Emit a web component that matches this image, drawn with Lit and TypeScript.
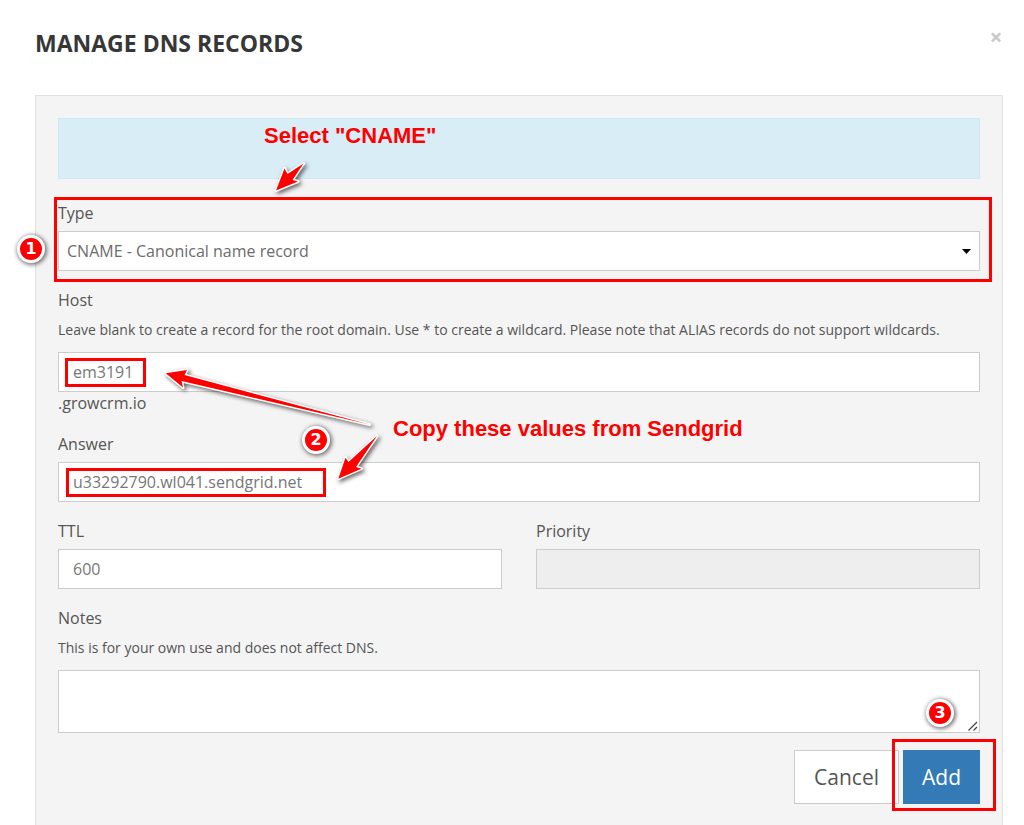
import { LitElement, html, css, svg } from "lit";
import { customElement, property } from "lit/decorators.js";

@customElement("step-badge")
class StepBadge extends LitElement {
  @property({ type: Number }) step = 1;

  static styles = css`
    :host {
      box-sizing: border-box;
      display: flex;
      align-items: center;
      justify-content: center;
      width: 28px;
      height: 28px;
      border: 3px solid #fff;
      border-radius: 50%;
      background: #fe0000;
      color: #fff;
      font: bold 16px/22px "DejaVu Sans", sans-serif;
      box-shadow: 1px 1px 4px 1px rgba(0, 0, 0, 0.55);
      pointer-events: none;
    }
  `;

  render() {
    return html`<span>${this.step}</span>`;
  }
}

const arrow = (points: string) => svg`<polygon class="arrow" points=${points} />`;

@customElement("app-root")
class AppRoot extends LitElement {
  static styles = css`
    :host {
      display: block;
      background: #fff;
      color: #555;
      font: 16px/22px "Open Sans", sans-serif;
    }
    * {
      box-sizing: border-box;
    }
    .dialog {
      padding: 28px 21px 0 35px;
      min-height: 100vh;
      display: flex;
      flex-direction: column;
    }
    .header {
      display: flex;
      justify-content: space-between;
      align-items: flex-start;
      height: 67px;
    }
    .title {
      margin: 0;
      font-size: 23px;
      line-height: 30px;
      font-weight: 700;
      color: #373737;
    }
    .close {
      border: 0;
      padding: 0;
      width: 14px;
      background: none;
      color: #c8c8c8;
      font: 700 22px/16px "Open Sans", sans-serif;
    }
    .panel {
      flex: 1;
      display: flex;
      flex-direction: column;
      gap: 19px;
      background: #f4f4f4;
      border: 1px solid #e1e1e1;
      border-bottom: 0;
      padding: 22px 22px 21px;
    }
    .notice {
      position: relative;
      height: 61px;
      margin-bottom: 5px;
      background: #d9edf7;
      border: 1px solid #cbebf3;
    }
    .group {
      position: relative;
      display: flex;
      flex-direction: column;
    }
    .label {
      margin-bottom: 8px;
      line-height: 20px;
    }
    .help {
      margin: 2px 0 12px;
      font-size: 14px;
      line-height: 20px;
    }
    .suffix {
      line-height: 23px;
    }
    .wrap {
      position: relative;
      display: flex;
    }
    .field {
      width: 100%;
      min-width: 0;
      height: 40px;
      margin: 0;
      padding: 0 14px;
      border: 1px solid #ccc;
      border-radius: 0;
      background: #fff;
      color: #777;
      font: 16px/22px "Open Sans", sans-serif;
    }
    .field:disabled {
      background: #eee;
    }
    .select {
      appearance: none;
      padding: 0 28px 0 8px;
      color: #6c6c6c;
    }
    .area {
      display: block;
      height: 63px;
      padding: 8px 14px;
      resize: vertical;
    }
    .area::-webkit-resizer {
      background: transparent;
    }
    .grip {
      position: absolute;
      right: 2px;
      bottom: 2px;
      width: 10px;
      height: 10px;
      fill: none;
      stroke: #444;
      stroke-width: 1.2;
      pointer-events: none;
    }
    .caret {
      position: absolute;
      right: 9px;
      top: 18px;
      width: 9px;
      height: 5px;
      pointer-events: none;
    }
    .columns {
      display: grid;
      grid-template-columns: 1fr 1fr;
      gap: 34px;
    }
    .actions {
      display: flex;
      justify-content: flex-end;
      gap: 4px;
      margin-top: -2px;
    }
    .button {
      height: 54px;
      padding: 0 19px;
      border: 1px solid #ccc;
      background: #fff;
      color: #555;
      font: 21px/28px "Open Sans", sans-serif;
    }
    .primary {
      border-color: #337ab7;
      background: #337ab7;
      color: #fff;
      padding: 0 18px;
    }
    .mark {
      position: absolute;
      border: 3px solid #fe0000;
      pointer-events: none;
    }
    .mark-type {
      inset: -6px -12px -11px -4px;
    }
    .mark-host {
      left: 7px;
      top: 6px;
      width: 81px;
      height: 29px;
    }
    .mark-answer {
      left: 8px;
      top: 6px;
      width: 260px;
      height: 29px;
    }
    .mark-add {
      inset: -11px -16px -7px -11px;
    }
    .badge {
      position: absolute;
    }
    .badge-type {
      left: -41px;
      top: 32px;
    }
    .badge-copy {
      left: 244px;
      top: 136px;
    }
    .badge-add {
      right: 26px;
      top: 29px;
    }
    .callout {
      position: absolute;
      color: #fe0000;
      font: bold 22px/26px "Liberation Sans", sans-serif;
      white-space: nowrap;
      pointer-events: none;
    }
    .callout-type {
      left: 205px;
      top: 4px;
    }
    .callout-copy {
      left: 335px;
      top: 126px;
    }
    .arrows {
      position: absolute;
      overflow: visible;
      pointer-events: none;
      filter: drop-shadow(2px 2px 2px rgba(0, 0, 0, 0.6));
      z-index: 1;
    }
    .arrow {
      fill: #fe0000;
      stroke: #fff;
      stroke-width: 3;
      stroke-linejoin: round;
      paint-order: stroke;
    }
    .arrows-type {
      left: 210px;
      top: 40px;
      width: 40px;
      height: 36px;
    }
    .arrows-copy {
      left: 100px;
      top: 76px;
      width: 230px;
      height: 120px;
    }
  `;

  render() {
    return html`
      <main class="dialog">
        <header class="header">
          <h1 class="title">MANAGE DNS RECORDS</h1>
          <button class="close" type="button" aria-label="Close">×</button>
        </header>
        <form class="panel">
          <div class="notice">
            <span class="callout callout-type">Select "CNAME"</span>
            <svg class="arrows arrows-type" viewBox="269 159 40 36" aria-hidden="true">
              ${arrow("276,190.5 284.5,168.5 287.5,174 303.5,163.5 292.5,180 298,181.5")}
            </svg>
          </div>

          <div class="group">
            <label class="label" for="type">Type</label>
            <div class="wrap">
              <select class="field select" id="type">
                <option>CNAME - Canonical name record</option>
              </select>
              <svg class="caret" viewBox="0 0 9 5" aria-hidden="true"><path d="M0 0H9L4.5 5Z" /></svg>
            </div>
            <span class="mark mark-type"></span>
            <step-badge class="badge badge-type" .step=${1}></step-badge>
          </div>

          <div class="group">
            <label class="label" for="host">Host</label>
            <p class="help">
              Leave blank to create a record for the root domain. Use * to create a wildcard. Please note that ALIAS
              records do not support wildcards.
            </p>
            <div class="wrap">
              <input class="field" id="host" type="text" .value=${"em3191"} />
              <span class="mark mark-host"></span>
            </div>
            <span class="suffix">.growcrm.io</span>
            <svg class="arrows arrows-copy" viewBox="158 365 230 120" aria-hidden="true">
              ${arrow("165.7,372.3 187,369 184.5,374 369.5,423.5 181.5,380 183,386.5")}
              ${arrow("338.3,477.7 345.5,456.7 348.5,461 377,435 356,466 361.5,467.7")}
            </svg>
            <step-badge class="badge badge-copy" .step=${2}></step-badge>
            <span class="callout callout-copy">Copy these values from Sendgrid</span>
          </div>

          <div class="group">
            <label class="label" for="answer">Answer</label>
            <div class="wrap">
              <input class="field" id="answer" type="text" .value=${"u33292790.wl041.sendgrid.net"} />
              <span class="mark mark-answer"></span>
            </div>
          </div>

          <div class="columns">
            <div class="group">
              <label class="label" for="ttl">TTL</label>
              <input class="field" id="ttl" type="text" .value=${"600"} />
            </div>
            <div class="group">
              <label class="label" for="priority">Priority</label>
              <input class="field" id="priority" type="text" disabled />
            </div>
          </div>

          <div class="group">
            <label class="label" for="notes">Notes</label>
            <p class="help">This is for your own use and does not affect DNS.</p>
            <div class="wrap">
              <textarea class="field area" id="notes"></textarea>
              <svg class="grip" viewBox="0 0 10 10" aria-hidden="true"><path d="M0.5 9.5L9 1M5.5 9.5L9 6" /></svg>
              <step-badge class="badge badge-add" .step=${3}></step-badge>
            </div>
          </div>

          <div class="actions">
            <button class="button" type="button">Cancel</button>
            <div class="wrap">
              <button class="button primary" type="button">Add</button>
              <span class="mark mark-add"></span>
            </div>
          </div>
        </form>
      </main>
    `;
  }
}
